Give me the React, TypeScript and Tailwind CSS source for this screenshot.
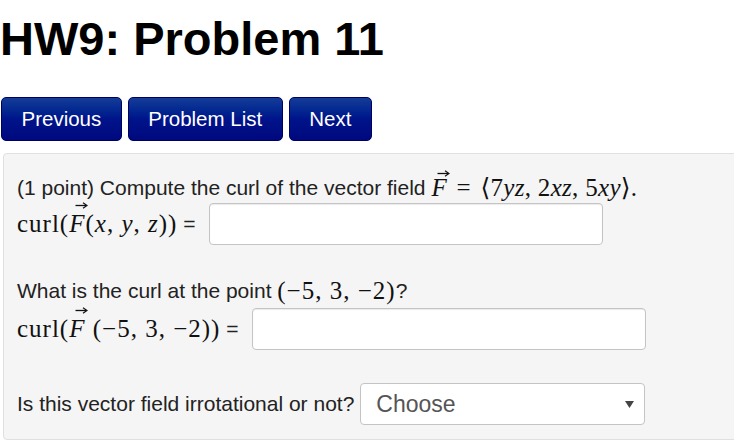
import React from "react";

const sans = { fontFamily: '"Liberation Sans", Arial, sans-serif' };

function Vec() {
  // italic F with a small arrow drawn over it
  return (
    <span className="relative inline-block italic">
      F
      <svg
        className="absolute left-[6px] top-[-3px]"
        width="13"
        height="7"
        viewBox="0 0 13 7"
      >
        <path d="M0.5 3.5 H11" stroke="#111" strokeWidth="1.3" />
        <path d="M8 0.8 L12 3.5 L8 6.2" fill="none" stroke="#111" strokeWidth="1.2" />
      </svg>
    </span>
  );
}

function Math({ children, tight }: { children: React.ReactNode; tight?: boolean }) {
  return (
    <span
      className={
        "font-['Liberation_Serif','DejaVu_Serif',serif] text-[25px] text-[#111] " +
        (tight ? "tracking-[0.3px]" : "tracking-[1px]")
      }
    >
      {children}
    </span>
  );
}

function NavButton({ label }: { label: string }) {
  return (
    <button className="h-[44px] rounded-[5px] border border-[#00005e] bg-gradient-to-b from-[#143c98] via-[#00138a] to-[#00087e] px-[19.5px] text-[20.5px] text-white">
      {label}
    </button>
  );
}

export default function App() {
  return (
    <div
      className="h-[447px] w-[734px] overflow-hidden bg-white text-[#222]"
      style={sans}
    >
      <h1 className="mt-[14px] text-[47px] font-bold leading-[50px] text-black">
        HW9: Problem 11
      </h1>

      <div className="mt-[33px] flex gap-[6px] pl-[1px]">
        <NavButton label="Previous" />
        <NavButton label="Problem List" />
        <NavButton label="Next" />
      </div>

      <div className="ml-[3px] mt-[12px] w-[780px] rounded-[4px] border border-[#e0e0e0] bg-[#f5f5f5] pb-[14px] pl-[13px] pt-[19px] text-[21px]">
        <div className="flex h-[30px] items-center whitespace-nowrap leading-[30px]">
          <span>(1 point) Compute the curl of the vector field&nbsp;</span>
          <Math tight>
            <Vec /> <span className="mx-[3px]">=</span> ⟨7<i>yz</i>, 2<i>xz</i>, 5<i>xy</i>⟩.
          </Math>
        </div>

        <div className="flex h-[42px] items-center whitespace-nowrap">
          <Math>
            curl(<Vec />(<i>x</i>, <i>y</i>, <i>z</i>))
          </Math>
          <span>&nbsp;=&nbsp;</span>
          <input
            type="text"
            className="ml-[8px] h-[42px] w-[394px] rounded-[4px] border border-[#c4c4c4] bg-white px-3 text-[20px] shadow-[inset_0_1px_1px_rgba(0,0,0,0.08)] outline-none"
          />
        </div>

        <div className="mt-[31px] flex h-[30px] items-center whitespace-nowrap leading-[30px]">
          <span>What is the curl at the point&nbsp;</span>
          <Math>(−5, 3, −2)</Math>
          <span>?</span>
        </div>

        <div className="mt-[2px] flex h-[42px] items-center whitespace-nowrap">
          <Math>
            curl(<Vec />&nbsp;(−5, 3, −2))
          </Math>
          <span>&nbsp;=&nbsp;</span>
          <input
            type="text"
            className="ml-[8px] h-[42px] w-[394px] rounded-[4px] border border-[#c4c4c4] bg-white px-3 text-[20px] shadow-[inset_0_1px_1px_rgba(0,0,0,0.08)] outline-none"
          />
        </div>

        <div className="mt-[33px] flex h-[42px] items-center whitespace-nowrap">
          <span>Is this vector field irrotational or not?</span>
          <div className="relative ml-[6px]">
            <select
              defaultValue=""
              className="h-[42px] w-[285px] appearance-none rounded-[4px] border border-[#c4c4c4] bg-white pl-[15px] text-[23px] text-[#555] outline-none"
              style={sans}
            >
              <option value="">Choose</option>
              <option value="yes">Irrotational</option>
              <option value="no">Not irrotational</option>
            </select>
            <svg
              className="pointer-events-none absolute right-[11px] top-[18px]"
              width="9"
              height="7"
              viewBox="0 0 9 7"
            >
              <path d="M0 0 H9 L4.5 7 Z" fill="#444" />
            </svg>
          </div>
        </div>
      </div>
    </div>
  );
}
